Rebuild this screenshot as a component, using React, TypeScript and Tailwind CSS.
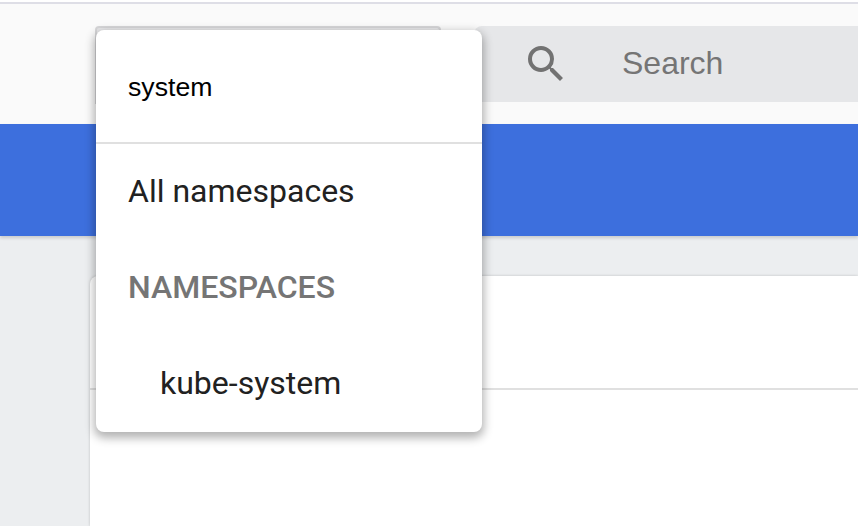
import React from 'react';
import { MdSearch } from 'react-icons/md';

const Dropdown: React.FC = () => (
  <div className="absolute left-[96px] top-[30px] w-[386px] h-[402px] bg-white rounded-lg shadow-[0_4px_10px_2px_rgba(0,0,0,0.3)] flex flex-col">
    <div className="h-[114px] shrink-0 border-b-2 border-[#e0e0e0] pl-8 pt-[2px] flex items-center font-['Liberation_Sans',sans-serif] text-[26.67px] text-black">
      system
    </div>
    <div className="h-[94px] pl-8 flex items-center text-[32px] text-[#212121]">All namespaces</div>
    <div className="h-[98px] pl-8 flex items-center text-[32px] font-medium text-[#757575]">NAMESPACES</div>
    <div className="h-[94px] pl-16 flex items-center text-[32px] text-[#212121]">kube-system</div>
  </div>
);

export default function App() {
  return (
    <div className="relative w-[858px] h-[526px] overflow-hidden bg-[#eceef0] font-['Roboto',sans-serif] flex flex-col">
      <div className="h-[2px] bg-white shrink-0" />
      <div className="h-[2px] bg-[#dedee6] shrink-0" />
      <header className="h-[120px] shrink-0 bg-[#fafafa] flex items-start pt-[22px]">
        <div className="ml-[95px] w-[346px] h-[78px] bg-[#e8e8ea] border-2 border-b-0 border-[#d6d6d8] rounded-t" />
        <div className="ml-[33px] flex-1 h-[76px] bg-[#e6e7e9] rounded-tl-lg flex items-center pl-[48px]">
          <MdSearch size={48} className="text-[#727272] shrink-0" />
          <span className="ml-[52px] mb-[2px] font-['Liberation_Sans',sans-serif] text-[32px] text-[#757575]">Search</span>
        </div>
      </header>
      <div className="h-[112px] shrink-0 bg-[#3d6fdd] shadow-[0_2px_3px_rgba(0,0,0,0.15)]" />
      <main className="flex-1 pt-[40px] pl-[90px]">
        <div className="h-full bg-white rounded-tl-lg shadow-[0_0_3px_rgba(0,0,0,0.2)]">
          <div className="h-[114px] border-b-2 border-[#e0e0e0]" />
        </div>
      </main>
      <Dropdown />
    </div>
  );
}
